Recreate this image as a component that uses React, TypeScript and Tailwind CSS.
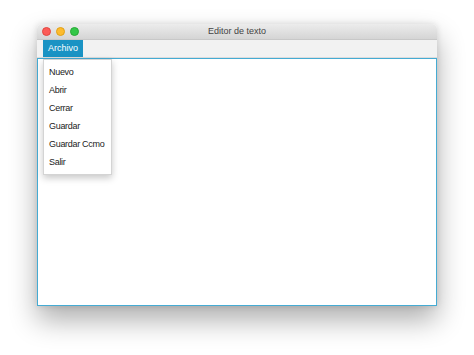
import React from "react";

const items = ["Nuevo", "Abrir", "Cerrar", "Guardar", "Guardar Ccmo", "Salir"];

export default function App() {
  return (
    <div className="w-[474px] h-[355px] bg-white overflow-hidden font-['Liberation_Sans',Arial,sans-serif]">
      <div className="ml-[37px] mt-[24px] w-[400px] h-[282px] flex flex-col rounded-t-[5px] shadow-[0_14px_28px_rgba(0,0,0,0.32),0_0_6px_rgba(0,0,0,0.12)] relative">
        {/* Title bar */}
        <div className="relative h-[16px] flex items-center rounded-t-[5px] bg-gradient-to-b from-[#ececec] to-[#d5d5d5] border-b border-[#c8c8c8]">
          <div className="flex items-center gap-[5px] pl-[5px]">
            <span className="w-[9px] h-[9px] rounded-full bg-[#fc5b57] border border-[#e2463f]" />
            <span className="w-[9px] h-[9px] rounded-full bg-[#fdbb2e] border border-[#e1a116]" />
            <span className="w-[9px] h-[9px] rounded-full bg-[#33c748] border border-[#27aa35]" />
          </div>
          <span className="absolute inset-0 flex items-center justify-center text-[9px] text-[#444] leading-none">
            Editor de texto
          </span>
        </div>

        {/* Menu bar */}
        <div className="h-[18px] flex bg-[#f2f2f2] border-b border-[#dcdcdc] pl-[6px]">
          <div className="w-[40px] h-full bg-[#1a93c4] text-white text-[9px] flex items-center justify-center leading-none">
            Archivo
          </div>
        </div>

        {/* Text area */}
        <div className="flex-1 bg-white border-[1.5px] border-[#45abd3]" />

        {/* Dropdown */}
        <div className="absolute left-[6px] top-[35px] w-[69px] py-[3px] bg-white border border-[#d4d4d4] shadow-[0_3px_7px_rgba(0,0,0,0.22)]">
          {items.map((label) => (
            <div key={label} className="h-[18px] flex items-center pl-[5px] text-[9px] tracking-[-0.3px] text-[#222] leading-none">
              {label}
            </div>
          ))}
        </div>
      </div>
    </div>
  );
}
